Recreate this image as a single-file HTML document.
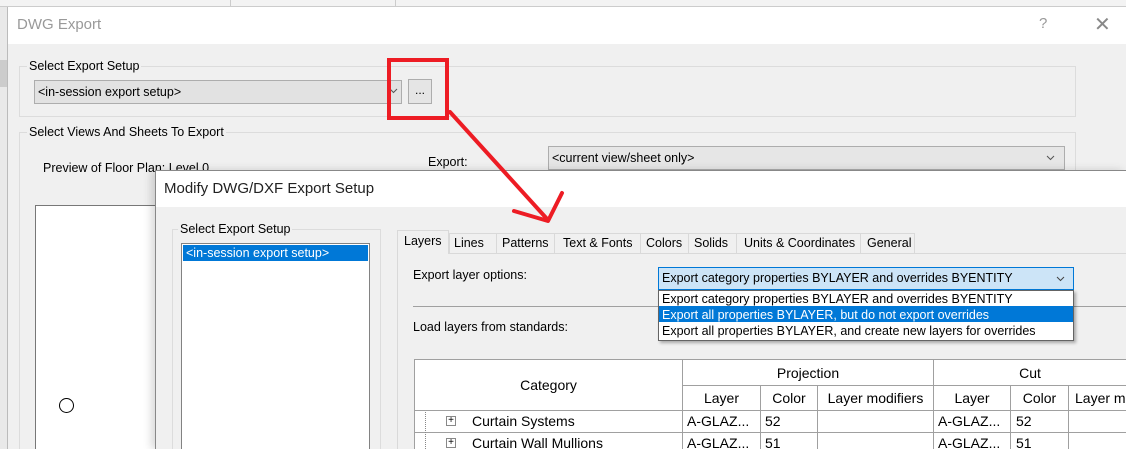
<!DOCTYPE html>
<html style="overflow:hidden;width:1126px;height:449px"><head><style>
*{box-sizing:border-box;margin:0;padding:0}
body{width:1126px;height:449px;overflow:hidden;background:#e9e9e9;font-family:"Liberation Sans",sans-serif;font-size:12px;color:#000;position:relative}
.a{position:absolute}
.t{position:absolute;white-space:nowrap}
.grp{position:absolute;border:1px solid #dcdcdc}
.cell{position:absolute;border-right:1px solid #a0a0a0;border-bottom:1px solid #a0a0a0;font-size:14px;display:flex;align-items:center;justify-content:center;background:#fff}
</style></head><body>
<div class="a" style="left:0;top:0;width:1126px;height:7px;background:#f3f3f3;border-bottom:1px solid #ccc"></div>
<div class="a" style="left:230px;top:0;width:1px;height:7px;background:#ccc"></div>
<div class="a" style="left:395px;top:0;width:1px;height:7px;background:#ccc"></div>
<div class="a" style="left:0;top:60px;width:7px;height:27px;background:#ccc"></div>
<div class="a" style="left:7px;top:7px;width:1119px;height:442px;background:#f0f0f0;border-left:1px solid #bbb"></div>
<div class="a" style="left:8px;top:7px;width:1118px;height:37px;background:#fff"></div>
<div class="t" style="left:17px;top:16px;font-size:15px;color:#999">DWG Export</div>
<div class="t" style="left:1039px;top:15px;font-size:15px;color:#999">?</div>
<div class="t" style="left:1094px;top:12px;font-size:20px;color:#888">✕</div>
<div class="grp" style="left:19px;top:66px;width:1057px;height:51px"></div>
<div class="t" style="left:27px;top:59px;background:#f0f0f0;padding:0 2px;font-size:12.5px">Select Export Setup</div>
<div class="a" style="left:34px;top:80px;width:368px;height:24px;background:#e2e2e2;border:1px solid #adadad"></div>
<div class="t" style="left:38px;top:85px;font-size:12.5px">&lt;in-session export setup&gt;</div>
<svg class="a" style="left:389px;top:88px" width="9" height="6"><path d="M1 1 L4.5 4.5 L8 1" fill="none" stroke="#555"/></svg>
<div class="a" style="left:408px;top:79px;width:24px;height:25px;background:#e5e5e5;border:1px solid #adadad;text-align:center;font-size:12px;line-height:20px">...</div>
<div class="grp" style="left:19px;top:132px;width:1057px;height:330px"></div>
<div class="t" style="left:27px;top:125px;background:#f0f0f0;padding:0 2px;font-size:12.5px">Select Views And Sheets To Export</div>
<div class="t" style="left:43px;top:161px;font-size:12.5px">Preview of Floor Plan: Level 0</div>
<div class="t" style="left:428px;top:155px;font-size:12.5px">Export:</div>
<div class="a" style="left:548px;top:146px;width:517px;height:24px;background:#e6e6e6;border:1px solid #adadad"></div>
<div class="t" style="left:552px;top:151px;font-size:12.5px">&lt;current view/sheet only&gt;</div>
<svg class="a" style="left:1046px;top:155px" width="9" height="6"><path d="M1 1 L4.5 4.5 L8 1" fill="none" stroke="#555"/></svg>
<div class="a" style="left:35px;top:205px;width:130px;height:244px;background:#fff;border:1px solid #777;border-bottom:none"></div>
<div class="a" style="left:59px;top:398px;width:15px;height:15px;border:1px solid #000;border-radius:50%"></div>
<div class="a" style="left:155px;top:170px;width:971px;height:279px;background:#f0f0f0;border-left:1px solid #888;border-top:1px solid #888;box-shadow:-4px 0 8px rgba(0,0,0,.15)"></div>
<div class="a" style="left:156px;top:171px;width:970px;height:36px;background:#fff"></div>
<div class="t" style="left:164px;top:180px;font-size:15px;color:#222">Modify DWG/DXF Export Setup</div>
<div class="a" style="left:172px;top:229px;width:209px;height:220px;border:1px solid #dcdcdc;border-bottom:none"></div>
<div class="t" style="left:178px;top:222px;background:#f0f0f0;padding:0 2px;font-size:12.5px">Select Export Setup</div>
<div class="a" style="left:181px;top:243px;width:189px;height:206px;background:#fff;border:1px solid #828282;border-bottom:none"></div>
<div class="a" style="left:183px;top:245px;width:185px;height:16px;background:#0078d7"></div>
<div class="t" style="left:186px;top:246px;font-size:12.5px;color:#fff">&lt;in-session export setup&gt;</div>
<div class="a" style="left:397px;top:253px;width:740px;height:196px;border:1px solid #d9d9d9;border-bottom:none;background:#f0f0f0"></div>
<div class="a" style="left:397px;top:230px;width:52px;height:24px;background:#f0f0f0;border:1px solid #d9d9d9;border-bottom:none"></div>
<div class="t" style="left:404px;top:234px;font-size:12.5px">Layers</div>
<div class="a" style="left:449px;top:233px;width:466px;height:20px;border:1px solid #d9d9d9;border-bottom:none;background:#f0f0f0"></div>
<div class="a" style="left:496px;top:233px;width:1px;height:20px;background:#d9d9d9"></div>
<div class="a" style="left:554px;top:233px;width:1px;height:20px;background:#d9d9d9"></div>
<div class="a" style="left:640px;top:233px;width:1px;height:20px;background:#d9d9d9"></div>
<div class="a" style="left:688px;top:233px;width:1px;height:20px;background:#d9d9d9"></div>
<div class="a" style="left:736px;top:233px;width:1px;height:20px;background:#d9d9d9"></div>
<div class="a" style="left:860px;top:233px;width:1px;height:20px;background:#d9d9d9"></div>
<div class="t" style="left:454px;top:236px;font-size:12.5px">Lines</div>
<div class="t" style="left:502px;top:236px;font-size:12.5px">Patterns</div>
<div class="t" style="left:563px;top:236px;font-size:12.5px">Text &amp; Fonts</div>
<div class="t" style="left:646px;top:236px;font-size:12.5px">Colors</div>
<div class="t" style="left:694px;top:236px;font-size:12.5px">Solids</div>
<div class="t" style="left:744px;top:236px;font-size:12.5px">Units &amp; Coordinates</div>
<div class="t" style="left:867px;top:236px;font-size:12.5px">General</div>
<div class="t" style="left:413px;top:268px;font-size:12.5px">Export layer options:</div>
<div class="a" style="left:413px;top:306px;width:713px;height:1px;background:#a0a0a0"></div>
<div class="t" style="left:413px;top:320px;font-size:12.5px">Load layers from standards:</div>
<div class="a" style="left:658px;top:267px;width:416px;height:23px;background:#cce4f7;border:1px solid #0078d7"></div>
<div class="t" style="left:662px;top:271px;font-size:12.5px">Export category properties BYLAYER and overrides BYENTITY</div>
<svg class="a" style="left:1056px;top:276px" width="9" height="6"><path d="M1 1 L4.5 4.5 L8 1" fill="none" stroke="#444"/></svg>
<div class="a" style="left:658px;top:290px;width:416px;height:51px;background:#fff;border:1px solid #646464;box-shadow:2px 2px 3px rgba(0,0,0,.3)"></div>
<div class="a" style="left:659px;top:306px;width:414px;height:16px;background:#0078d7"></div>
<div class="t" style="left:662px;top:292px;font-size:12.5px">Export category properties BYLAYER and overrides BYENTITY</div>
<div class="t" style="left:662px;top:308px;font-size:12.5px;color:#fff">Export all properties BYLAYER, but do not export overrides</div>
<div class="t" style="left:662px;top:324px;font-size:12.5px">Export all properties BYLAYER, and create new layers for overrides</div>
<div class="a" style="left:414px;top:359px;width:712px;height:90px;background:#fff;border:1px solid #a0a0a0;border-right:none;border-bottom:none"></div>
<div class="cell" style="left:415px;top:360px;width:268px;height:51px">Category</div>
<div class="cell" style="left:683px;top:360px;width:251px;height:26px">Projection</div>
<div class="cell" style="left:934px;top:360px;width:192px;height:26px;border-right:none">Cut</div>
<div class="cell" style="left:683px;top:386px;width:78px;height:25px">Layer</div>
<div class="cell" style="left:761px;top:386px;width:57px;height:25px">Color</div>
<div class="cell" style="left:818px;top:386px;width:116px;height:25px">Layer modifiers</div>
<div class="cell" style="left:934px;top:386px;width:77px;height:25px">Layer</div>
<div class="cell" style="left:1011px;top:386px;width:58px;height:25px">Color</div>
<div class="cell" style="left:1069px;top:386px;width:57px;height:25px;justify-content:flex-start;padding-left:6px;overflow:hidden;border-right:none">Layer m</div>
<div class="a" style="left:415px;top:432px;width:711px;height:1px;background:#a0a0a0"></div>
<div class="a" style="left:682px;top:411px;width:1px;height:38px;background:#a0a0a0"></div>
<div class="a" style="left:760px;top:411px;width:1px;height:38px;background:#a0a0a0"></div>
<div class="a" style="left:817px;top:411px;width:1px;height:38px;background:#a0a0a0"></div>
<div class="a" style="left:933px;top:411px;width:1px;height:38px;background:#a0a0a0"></div>
<div class="a" style="left:1010px;top:411px;width:1px;height:38px;background:#a0a0a0"></div>
<div class="a" style="left:1068px;top:411px;width:1px;height:38px;background:#a0a0a0"></div>
<div class="a" style="left:425px;top:412px;width:0;height:37px;border-left:1px dotted #888"></div>
<div class="a" style="left:446px;top:416px;width:10px;height:10px;border:1px solid #888;font-size:10px;line-height:8px;text-align:center">+</div>
<div class="a" style="left:446px;top:438px;width:10px;height:10px;border:1px solid #888;font-size:10px;line-height:8px;text-align:center">+</div>
<div class="t" style="left:472px;top:413px;font-size:14px">Curtain Systems</div>
<div class="t" style="left:472px;top:435px;font-size:14px">Curtain Wall Mullions</div>
<div class="t" style="left:687px;top:413px;font-size:14px">A-GLAZ...</div>
<div class="t" style="left:765px;top:413px;font-size:14px">52</div>
<div class="t" style="left:938px;top:413px;font-size:14px">A-GLAZ...</div>
<div class="t" style="left:1016px;top:413px;font-size:14px">52</div>
<div class="t" style="left:687px;top:435px;font-size:14px">A-GLAZ...</div>
<div class="t" style="left:765px;top:435px;font-size:14px">51</div>
<div class="t" style="left:938px;top:435px;font-size:14px">A-GLAZ...</div>
<div class="t" style="left:1016px;top:435px;font-size:14px">51</div>
<svg class="a" style="left:0;top:0" width="1126" height="449">
<rect x="389" y="60" width="58" height="58" fill="none" stroke="#ed1c24" stroke-width="4"/>
<path d="M450 112 L548 220 M514 211 L548 221 L562 193" fill="none" stroke="#ed1c24" stroke-width="4" stroke-linecap="round" stroke-linejoin="round"/>
</svg>
</body></html>
